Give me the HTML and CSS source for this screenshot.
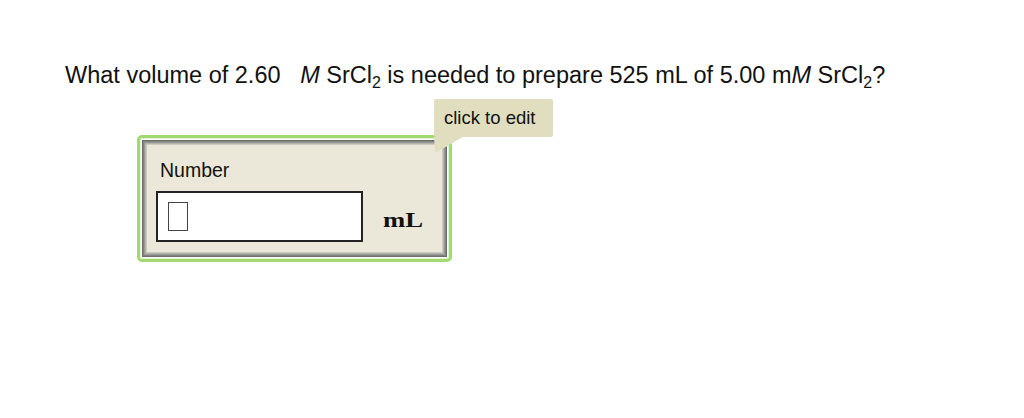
FILE: index.html
```html
<!DOCTYPE html>
<html>
<head>
<meta charset="utf-8">
<link rel="stylesheet" href="styles.css">
</head>
<body>
<div class="page">
  <p class="question">What volume of 2.60&nbsp;&nbsp; <i>M</i> SrCl<sub>2</sub> is needed to prepare 525 mL of 5.00 m<i>M</i> SrCl<sub>2</sub>?</p>
  <div class="answer-area">
    <div class="outer">
      <div class="bevel">
        <div class="label">Number</div>
        <div class="row">
          <div class="input"><span class="caret"></span></div>
          <span class="unit">mL</span>
        </div>
      </div>
    </div>
    <div class="tip">click to edit</div>
  </div>
</div>
</body>
</html>
```
FILE: styles.css
```css
html, body { margin: 0; padding: 0; background: #fff; }
body { font-family: "Liberation Sans", Arial, sans-serif; color: #111; }
.page { width: 1024px; height: 418px; position: relative; overflow: hidden; }
.question {
  margin: 0;
  padding: 61px 0 0 65px;
  font-size: 23.5px;
  line-height: 29px;
  height: 29px;
  white-space: nowrap;
}
.question sub { font-size: 16px; vertical-align: -5px; line-height: 0; }
.answer-area { position: relative; margin: 45px 0 0 137px; width: 420px; }
.outer {
  width: 305px;
  height: 117px;
  border: 3px solid #a2da72;
  border-radius: 5px;
  padding: 2px;
  background: #fff;
  box-shadow: inset 0 0 0 1px #e2f4d2;
}
.bevel {
  box-sizing: border-box;
  height: 117px;
  border: 1px solid #6c6e6b;
  box-shadow: inset 0 0 0 1px #828481, inset 0 0 0 2px #9a9b97, inset 0 0 0 3px #b2b3ad, inset 0 0 0 4px #cbcac1;
  background: #ece8d9;
  padding: 18px 0 0 13px;
}
.label { font-size: 19.5px; line-height: 22px; height: 32px; padding-left: 4px; }
.row { display: flex; align-items: center; }
.input {
  width: 193px;
  height: 47px;
  border: 2px solid #222;
  background: #fff;
  display: flex;
  align-items: center;
  padding-left: 10px;
  box-sizing: content-box;
}
.caret { width: 18px; height: 27px; border: 1px solid #444; display: block; }
.unit {
  font-family: "Liberation Serif", "Times New Roman", serif;
  font-weight: bold;
  font-size: 21px;
  margin-left: 20px;
  padding-top: 7px;
  display: inline-block;
  transform: scaleX(1.27);
  transform-origin: left center;
}
.tip {
  position: absolute;
  left: 297px;
  top: -36px;
  width: 119px;
  height: 38px;
  background: #e1dec0;
  border-radius: 2px;
  font-size: 18.5px;
  line-height: 38px;
  text-indent: 10px;
  box-sizing: border-box;
}
.tip::after {
  content: "";
  position: absolute;
  left: 0;
  top: 38px;
  width: 29px;
  height: 16px;
  background: #e1dec0;
  clip-path: polygon(0 0, 100% 0, 4% 100%);
}
```
